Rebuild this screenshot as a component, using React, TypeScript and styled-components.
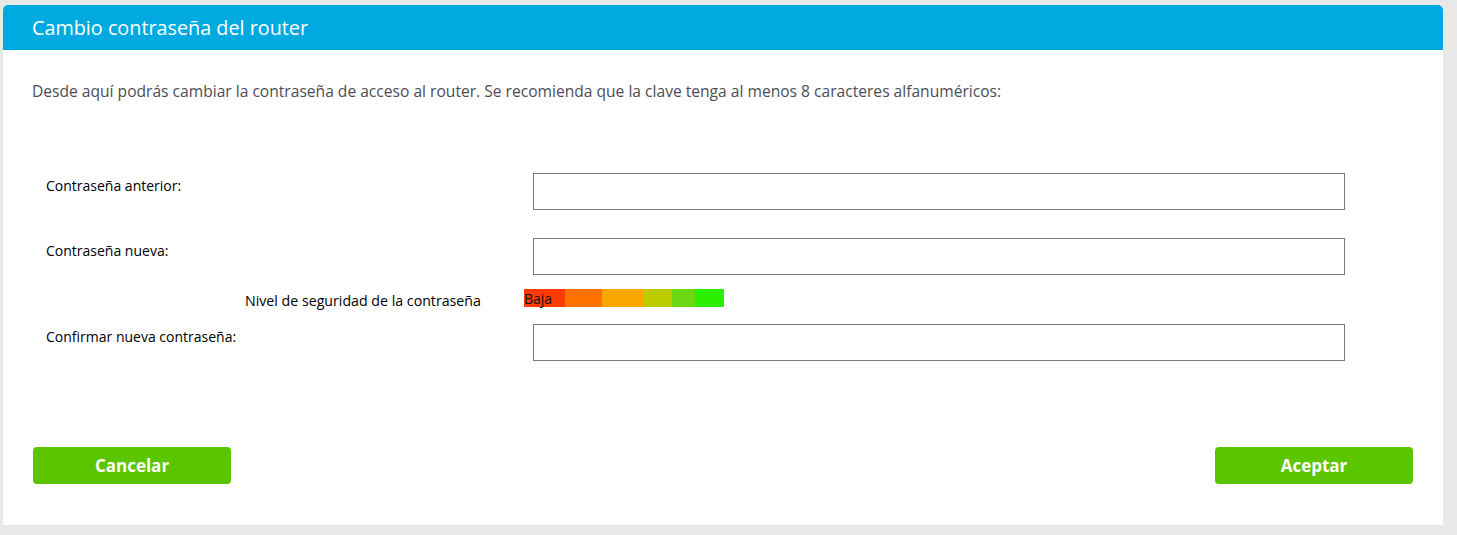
import React from 'react';
import styled, {createGlobalStyle} from 'styled-components';

const GlobalStyle = createGlobalStyle`
  html, body {
    margin: 0;
    padding: 0;
    background: #e8e8e6;
  }
  body {
    font-family: "Open Sans", "Noto Sans", sans-serif;
  }
`

const LEVELS = [
  {color: '#ff3a00', width: 41},
  {color: '#ff7200', width: 37},
  {color: '#f9a800', width: 41},
  {color: '#bccc00', width: 29},
  {color: '#6cd814', width: 23},
  {color: '#2df000', width: 29},
];

const FIELDS = [
  {id: 'old', label: 'Contraseña anterior:'},
  {id: 'new', label: 'Contraseña nueva:'},
];

export default function App() {
  return (
    <>
      <GlobalStyle/>
      <Page>
        <Panel>
          <Header>Cambio contraseña del router</Header>
          <Body>
            <Intro>
              Desde aquí podrás cambiar la contraseña de acceso al router. Se recomienda que la clave tenga al menos 8 caracteres alfanuméricos:
            </Intro>
            <Form>
              {FIELDS.map((f) => (
                <Row key={f.id}>
                  <Label>{f.label}</Label>
                  <Input type="password"/>
                </Row>
              ))}
              <StrengthRow>
                <StrengthLabel>Nivel de seguridad de la contraseña</StrengthLabel>
                <StrengthBar>
                  {LEVELS.map((l, i) => (
                    <Segment key={i} $color={l.color} $width={l.width}/>
                  ))}
                  <StrengthText>Baja</StrengthText>
                </StrengthBar>
              </StrengthRow>
              <Row>
                <Label>Confirmar nueva contraseña:</Label>
                <Input type="password"/>
              </Row>
            </Form>
            <Actions>
              <Button>Cancelar</Button>
              <Button>Aceptar</Button>
            </Actions>
          </Body>
        </Panel>
      </Page>
    </>
  );
}

const Page = styled.div`
  width: 1457px;
  height: 535px;
  padding: 5px 0 0 3px;
  box-sizing: border-box;
`

const Panel = styled.div`
  width: 1440px;
  height: 520px;
  background: #fff;
  border-radius: 5px 5px 0 0;
`

const Header = styled.div`
  height: 45px;
  background: #00a9e0;
  border-radius: 5px 5px 0 0;
  color: #fff;
  font-size: 19.8px;
  line-height: 45px;
  padding-left: 29px;
`

const Body = styled.div`
  padding: 31px 30px 0 29px;
`

const Intro = styled.p`
  margin: 0;
  font-size: 15.6px;
  line-height: 20px;
  color: #4d4d55;
`

const Form = styled.div`
  margin-top: 72px;
  padding-left: 14px;
`

const Row = styled.div`
  display: flex;
  align-items: flex-start;
  margin-bottom: 28px;
`

const Label = styled.div`
  width: 487px;
  font-size: 14px;
  line-height: 20px;
  color: #000;
  padding-top: 3px;
`

const Input = styled.input`
  width: 812px;
  height: 37px;
  box-sizing: border-box;
  border: 1px solid #7a7a7a;
  margin: 0;
  outline: none;
`

const StrengthRow = styled.div`
  display: flex;
  align-items: center;
  margin-top: -14px;
  margin-bottom: 17px;
  height: 18px;
`

const StrengthLabel = styled.div`
  width: 279px;
  margin-left: 199px;
  font-size: 14.2px;
  color: #000;
  padding-top: 4px;
  white-space: nowrap;
`

const StrengthBar = styled.div`
  position: relative;
  display: flex;
  width: 200px;
  height: 18px;
`

const Segment = styled.div<{$color: string; $width: number}>`
  width: ${(p) => p.$width}px;
  height: 100%;
  background: ${(p) => p.$color};
`

const StrengthText = styled.span`
  position: absolute;
  left: 0;
  top: 0;
  font-size: 14px;
  line-height: 19px;
  color: #111;
`

const Actions = styled.div`
  display: flex;
  justify-content: space-between;
  margin-top: 86px;
  padding-left: 1px;
`

const Button = styled.button`
  width: 198px;
  height: 37px;
  border: none;
  border-radius: 4px;
  background: #5bc500;
  color: #fff;
  font-family: "Open Sans", "Noto Sans", sans-serif;
  font-weight: 700;
  font-size: 17px;
  cursor: pointer;
`
